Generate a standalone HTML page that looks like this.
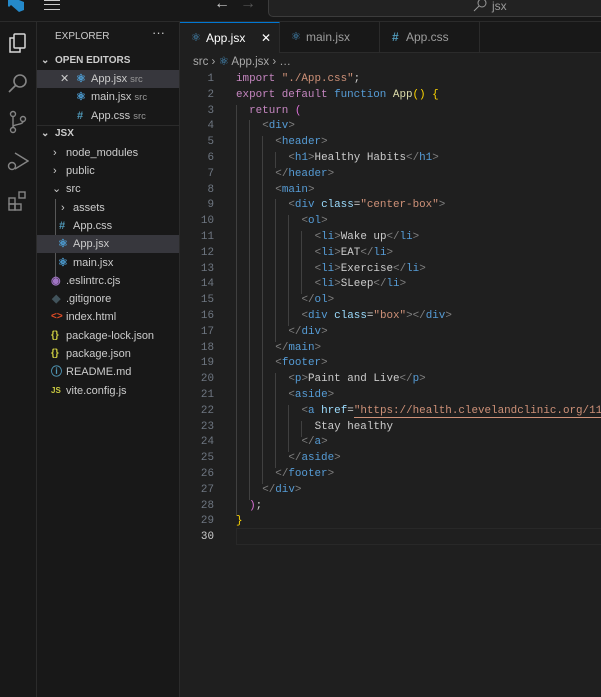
<!DOCTYPE html>
<html><head><meta charset="utf-8"><style>
*{margin:0;padding:0;box-sizing:border-box}
body{width:601px;height:697px;overflow:hidden;background:#1f1f1f;font-family:"Liberation Sans",sans-serif;color:#ccc;position:relative}
.title{position:absolute;left:0;top:0;width:601px;height:22px;background:#181818;border-bottom:1px solid #2b2b2b;overflow:hidden}
.search{position:absolute;left:268px;top:-6px;width:340px;height:23px;border:1px solid #3c3c3c;border-radius:5px;background:#222}
.act{position:absolute;left:0;top:22px;width:37px;height:675px;background:#181818;border-right:1px solid #2b2b2b}
.side{position:absolute;left:37px;top:22px;width:143px;height:675px;background:#181818;border-right:1px solid #2b2b2b;font-size:11px}
.row{position:absolute;left:0;width:142px;height:18px;line-height:18px;white-space:nowrap}
.row .ic{position:absolute;font-size:11px;font-weight:bold}
.sel{background:#37373d}
.tabs{position:absolute;left:180px;top:22px;width:421px;height:31px;background:#181818;border-bottom:1px solid #2b2b2b}
.tab{position:absolute;top:0;height:31px;border-right:1px solid #2b2b2b;font-size:12px;line-height:31px;color:#9d9d9d}
.code{position:absolute;left:180px;top:73px;width:421px;height:480px;overflow:hidden;font-family:"Liberation Mono",monospace;font-size:10.9px;white-space:pre}
.ln{position:absolute;left:0;width:34px;text-align:right;color:#6e7681}
.cl{position:absolute;left:56px;color:#ccc}
.g{display:inline-block;width:13.1px;height:16px;vertical-align:top;border-left:1px solid #404040}
.k{color:#c586c0}.s{color:#ce9178}.b{color:#569cd6}.f{color:#dcdcaa}.y{color:#ffd700}.p{color:#da70d6}.t{color:#808080}.a{color:#9cdcfe}.w{color:#d4d4d4}
</style></head><body>
<div class="title">
 <svg style="position:absolute;left:8px;top:0" width="16" height="12" viewBox="0 0 16 12"><path d="M11 0 L16 2 L16 10 L11 12 L3 5 L1 7 L0 6 L0 0 Z" fill="#2489ca"/></svg>
 <div style="position:absolute;left:44px;top:0;width:16px;height:10px;border-top:1px solid #ccc;border-bottom:1px solid #ccc"><div style="margin-top:3px;border-top:1px solid #ccc"></div></div>
 <div style="position:absolute;left:214px;top:-5px;font-size:16px;color:#ccc">←</div>
 <div style="position:absolute;left:240px;top:-5px;font-size:16px;color:#555">→</div>
 <div class="search"></div>
 <svg style="position:absolute;left:473px;top:0" width="14" height="12"><circle cx="9" cy="3" r="4" stroke="#999" fill="none"/><path d="M6 6 L1 11" stroke="#999"/></svg>
 <div style="position:absolute;left:492px;top:-1px;font-size:12px;color:#999">jsx</div>
</div>
<div class="act">
 <svg style="position:absolute;left:7px;top:10px" width="22" height="22" fill="none" stroke="#d7d7d7" stroke-width="1.5"><rect x="7" y="2" width="11" height="14" rx="1"/><path d="M7 6 H3 V20 H13 V16"/></svg>
 <svg style="position:absolute;left:7px;top:50px" width="22" height="22" fill="none" stroke="#858585" stroke-width="1.6"><circle cx="13" cy="9" r="6"/><path d="M9 13 L2 20"/></svg>
 <svg style="position:absolute;left:7px;top:88px" width="22" height="24" fill="none" stroke="#858585" stroke-width="1.4"><circle cx="6" cy="4" r="2.5"/><circle cx="6" cy="20" r="2.5"/><circle cx="16" cy="9" r="2.5"/><path d="M6 6.5 V17.5 M16 11.5 C16 15 6 14 6 17"/></svg>
 <svg style="position:absolute;left:7px;top:128px" width="22" height="22" fill="none" stroke="#858585" stroke-width="1.4"><path d="M8 3 L21 11 L8 19"/><circle cx="5" cy="16" r="3.5"/></svg>
 <svg style="position:absolute;left:7px;top:168px" width="22" height="22" fill="none" stroke="#858585" stroke-width="1.4"><rect x="2" y="8" width="6" height="6"/><rect x="2" y="14" width="6" height="6"/><rect x="8" y="14" width="6" height="6"/><rect x="12" y="2" width="6" height="6"/></svg>
</div>
<div class="side">
 <div style="position:absolute;left:18px;top:9px;font-size:10px;color:#ccc">EXPLORER</div>
 <div style="position:absolute;left:115px;top:3px;font-size:13px;color:#ccc">···</div>
 <div class="row" style="top:30px;font-weight:bold;font-size:10px"><span style="position:absolute;left:4px">⌄</span><span style="position:absolute;left:18px">OPEN EDITORS</span></div>
 <div class="row sel" style="top:48px"><span style="position:absolute;left:23px;color:#ccc">✕</span><span class="ic" style="left:39px;color:#4d9fd6">⚛</span><span style="position:absolute;left:54px">App.jsx <small style="font-size:9.5px;color:#999">src</small></span></div>
 <div class="row" style="top:66px"><span class="ic" style="left:39px;color:#4d9fd6">⚛</span><span style="position:absolute;left:54px">main.jsx <small style="font-size:9.5px;color:#999">src</small></span></div>
 <div class="row" style="top:85px"><span class="ic" style="left:40px;color:#519aba">#</span><span style="position:absolute;left:54px">App.css <small style="font-size:9.5px;color:#999">src</small></span></div>
 <div style="position:absolute;left:0;top:103px;width:142px;border-top:1px solid #2b2b2b"></div>
 <div class="row" style="top:103px;font-weight:bold;font-size:10px"><span style="position:absolute;left:4px">⌄</span><span style="position:absolute;left:18px">JSX</span></div>
 <div class="row" style="top:122px"><span style="position:absolute;left:16px">›</span><span style="position:absolute;left:29px">node_modules</span></div>
 <div class="row" style="top:140px"><span style="position:absolute;left:16px">›</span><span style="position:absolute;left:29px">public</span></div>
 <div class="row" style="top:158px"><span style="position:absolute;left:15px">⌄</span><span style="position:absolute;left:29px">src</span></div>
 <div style="position:absolute;left:18px;top:177px;height:80px;border-left:1px solid #585858"></div>
 <div class="row" style="top:177px"><span style="position:absolute;left:24px">›</span><span style="position:absolute;left:36px">assets</span></div>
 <div class="row" style="top:195px"><span class="ic" style="left:22px;color:#519aba">#</span><span style="position:absolute;left:36px">App.css</span></div>
 <div class="row sel" style="top:213px"><span class="ic" style="left:21px;color:#4d9fd6">⚛</span><span style="position:absolute;left:36px">App.jsx</span></div>
 <div class="row" style="top:232px"><span class="ic" style="left:21px;color:#4d9fd6">⚛</span><span style="position:absolute;left:36px">main.jsx</span></div>
 <div class="row" style="top:250px"><span class="ic" style="left:14px;color:#a074c4">◉</span><span style="position:absolute;left:29px">.eslintrc.cjs</span></div>
 <div class="row" style="top:268px"><span class="ic" style="left:15px;color:#41535b">◆</span><span style="position:absolute;left:29px">.gitignore</span></div>
 <div class="row" style="top:286px"><span class="ic" style="left:14px;color:#e44d26;font-size:10px">&lt;&gt;</span><span style="position:absolute;left:29px">index.html</span></div>
 <div class="row" style="top:305px"><span class="ic" style="left:14px;color:#cbcb41;font-size:10px">{}</span><span style="position:absolute;left:29px">package-lock.json</span></div>
 <div class="row" style="top:323px"><span class="ic" style="left:14px;color:#cbcb41;font-size:10px">{}</span><span style="position:absolute;left:29px">package.json</span></div>
 <div class="row" style="top:341px"><span class="ic" style="left:14px;color:#519aba">ⓘ</span><span style="position:absolute;left:29px">README.md</span></div>
 <div class="row" style="top:360px"><span class="ic" style="left:14px;color:#cbcb41;font-size:8px">JS</span><span style="position:absolute;left:29px">vite.config.js</span></div>
</div>
<div class="tabs">
 <div class="tab" style="left:0;width:100px;background:#1f1f1f;border-top:1px solid #0078d4;color:#fff"><span style="position:absolute;left:11px;color:#4d9fd6;font-size:11px">⚛</span><span style="position:absolute;left:26px">App.jsx</span><span style="position:absolute;left:81px">✕</span></div>
 <div class="tab" style="left:100px;width:100px"><span style="position:absolute;left:11px;color:#4d9fd6;font-size:11px">⚛</span><span style="position:absolute;left:26px">main.jsx</span></div>
 <div class="tab" style="left:200px;width:100px"><span style="position:absolute;left:12px;color:#519aba;font-weight:bold">#</span><span style="position:absolute;left:26px">App.css</span></div>
</div>
<div style="position:absolute;left:193px;top:54px;font-size:11.5px;color:#a9a9a9">src › <span style="color:#4d9fd6">⚛</span> App.jsx › …</div>
<div style="position:absolute;left:236px;top:528px;width:365px;height:17px;border:1px solid #282828;border-right:none"></div>
<div class="code">
<div class="ln" style="top:0">1</div><div class="cl" style="top:0"><span class="k">import</span> <span class="s">"./App.css"</span>;</div>
<div class="ln" style="top:15.8px">2</div><div class="cl" style="top:15.8px"><span class="k">export</span> <span class="k">default</span> <span class="b">function</span> <span class="f">App</span><span class="y">()</span> <span class="y">{</span></div>
<div class="ln" style="top:31.6px">3</div><div class="cl" style="top:31.6px"><i class="g"></i><span class="k">return</span> <span class="p">(</span></div>
<div class="ln" style="top:47.4px">4</div><div class="cl" style="top:47.4px"><i class="g"></i><i class="g"></i><span class="t">&lt;</span><span class="b">div</span><span class="t">&gt;</span></div>
<div class="ln" style="top:63.2px">5</div><div class="cl" style="top:63.2px"><i class="g"></i><i class="g"></i><i class="g"></i><span class="t">&lt;</span><span class="b">header</span><span class="t">&gt;</span></div>
<div class="ln" style="top:79px">6</div><div class="cl" style="top:79px"><i class="g"></i><i class="g"></i><i class="g"></i><i class="g"></i><span class="t">&lt;</span><span class="b">h1</span><span class="t">&gt;</span>Healthy Habits<span class="t">&lt;/</span><span class="b">h1</span><span class="t">&gt;</span></div>
<div class="ln" style="top:94.8px">7</div><div class="cl" style="top:94.8px"><i class="g"></i><i class="g"></i><i class="g"></i><span class="t">&lt;/</span><span class="b">header</span><span class="t">&gt;</span></div>
<div class="ln" style="top:110.6px">8</div><div class="cl" style="top:110.6px"><i class="g"></i><i class="g"></i><i class="g"></i><span class="t">&lt;</span><span class="b">main</span><span class="t">&gt;</span></div>
<div class="ln" style="top:126.4px">9</div><div class="cl" style="top:126.4px"><i class="g"></i><i class="g"></i><i class="g"></i><i class="g"></i><span class="t">&lt;</span><span class="b">div</span> <span class="a">class</span><span class="w">=</span><span class="s">"center-box"</span><span class="t">&gt;</span></div>
<div class="ln" style="top:142.2px">10</div><div class="cl" style="top:142.2px"><i class="g"></i><i class="g"></i><i class="g"></i><i class="g"></i><i class="g"></i><span class="t">&lt;</span><span class="b">ol</span><span class="t">&gt;</span></div>
<div class="ln" style="top:158px">11</div><div class="cl" style="top:158px"><i class="g"></i><i class="g"></i><i class="g"></i><i class="g"></i><i class="g"></i><i class="g"></i><span class="t">&lt;</span><span class="b">li</span><span class="t">&gt;</span>Wake up<span class="t">&lt;/</span><span class="b">li</span><span class="t">&gt;</span></div>
<div class="ln" style="top:173.8px">12</div><div class="cl" style="top:173.8px"><i class="g"></i><i class="g"></i><i class="g"></i><i class="g"></i><i class="g"></i><i class="g"></i><span class="t">&lt;</span><span class="b">li</span><span class="t">&gt;</span>EAT<span class="t">&lt;/</span><span class="b">li</span><span class="t">&gt;</span></div>
<div class="ln" style="top:189.6px">13</div><div class="cl" style="top:189.6px"><i class="g"></i><i class="g"></i><i class="g"></i><i class="g"></i><i class="g"></i><i class="g"></i><span class="t">&lt;</span><span class="b">li</span><span class="t">&gt;</span>Exercise<span class="t">&lt;/</span><span class="b">li</span><span class="t">&gt;</span></div>
<div class="ln" style="top:205.4px">14</div><div class="cl" style="top:205.4px"><i class="g"></i><i class="g"></i><i class="g"></i><i class="g"></i><i class="g"></i><i class="g"></i><span class="t">&lt;</span><span class="b">li</span><span class="t">&gt;</span>SLeep<span class="t">&lt;/</span><span class="b">li</span><span class="t">&gt;</span></div>
<div class="ln" style="top:221.2px">15</div><div class="cl" style="top:221.2px"><i class="g"></i><i class="g"></i><i class="g"></i><i class="g"></i><i class="g"></i><span class="t">&lt;/</span><span class="b">ol</span><span class="t">&gt;</span></div>
<div class="ln" style="top:237px">16</div><div class="cl" style="top:237px"><i class="g"></i><i class="g"></i><i class="g"></i><i class="g"></i><i class="g"></i><span class="t">&lt;</span><span class="b">div</span> <span class="a">class</span><span class="w">=</span><span class="s">"box"</span><span class="t">&gt;&lt;/</span><span class="b">div</span><span class="t">&gt;</span></div>
<div class="ln" style="top:252.8px">17</div><div class="cl" style="top:252.8px"><i class="g"></i><i class="g"></i><i class="g"></i><i class="g"></i><span class="t">&lt;/</span><span class="b">div</span><span class="t">&gt;</span></div>
<div class="ln" style="top:268.6px">18</div><div class="cl" style="top:268.6px"><i class="g"></i><i class="g"></i><i class="g"></i><span class="t">&lt;/</span><span class="b">main</span><span class="t">&gt;</span></div>
<div class="ln" style="top:284.4px">19</div><div class="cl" style="top:284.4px"><i class="g"></i><i class="g"></i><i class="g"></i><span class="t">&lt;</span><span class="b">footer</span><span class="t">&gt;</span></div>
<div class="ln" style="top:300.2px">20</div><div class="cl" style="top:300.2px"><i class="g"></i><i class="g"></i><i class="g"></i><i class="g"></i><span class="t">&lt;</span><span class="b">p</span><span class="t">&gt;</span>Paint and Live<span class="t">&lt;/</span><span class="b">p</span><span class="t">&gt;</span></div>
<div class="ln" style="top:316px">21</div><div class="cl" style="top:316px"><i class="g"></i><i class="g"></i><i class="g"></i><i class="g"></i><span class="t">&lt;</span><span class="b">aside</span><span class="t">&gt;</span></div>
<div class="ln" style="top:331.8px">22</div><div class="cl" style="top:331.8px"><i class="g"></i><i class="g"></i><i class="g"></i><i class="g"></i><i class="g"></i><span class="t">&lt;</span><span class="b">a</span> <span class="a">href</span><span class="w">=</span><span class="s" style="border-bottom:1px solid #ce9178">"https://health.clevelandclinic.org/11-</span></div>
<div class="ln" style="top:347.6px">23</div><div class="cl" style="top:347.6px"><i class="g"></i><i class="g"></i><i class="g"></i><i class="g"></i><i class="g"></i><i class="g"></i>Stay healthy</div>
<div class="ln" style="top:363.4px">24</div><div class="cl" style="top:363.4px"><i class="g"></i><i class="g"></i><i class="g"></i><i class="g"></i><i class="g"></i><span class="t">&lt;/</span><span class="b">a</span><span class="t">&gt;</span></div>
<div class="ln" style="top:379.2px">25</div><div class="cl" style="top:379.2px"><i class="g"></i><i class="g"></i><i class="g"></i><i class="g"></i><span class="t">&lt;/</span><span class="b">aside</span><span class="t">&gt;</span></div>
<div class="ln" style="top:395px">26</div><div class="cl" style="top:395px"><i class="g"></i><i class="g"></i><i class="g"></i><span class="t">&lt;/</span><span class="b">footer</span><span class="t">&gt;</span></div>
<div class="ln" style="top:410.8px">27</div><div class="cl" style="top:410.8px"><i class="g"></i><i class="g"></i><span class="t">&lt;/</span><span class="b">div</span><span class="t">&gt;</span></div>
<div class="ln" style="top:426.6px">28</div><div class="cl" style="top:426.6px"><i class="g"></i><span class="p">)</span>;</div>
<div class="ln" style="top:442.4px">29</div><div class="cl" style="top:442.4px"><span class="y">}</span></div>
<div class="ln" style="top:458.2px;color:#ccc">30</div>
</div>
</body></html>
